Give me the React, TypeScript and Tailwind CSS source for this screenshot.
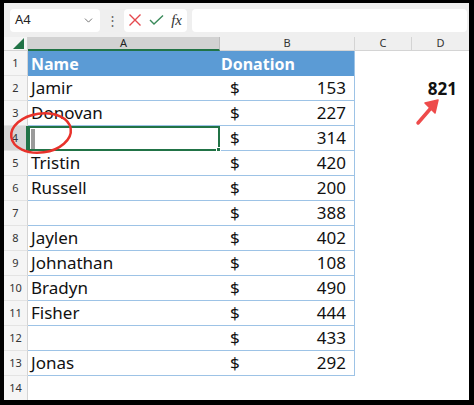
import { ChevronDown } from "lucide-react";

const rows: Array<{ name: string; amount: number | null }> = [
    { name: "Jamir", amount: 153 },
    { name: "Donovan", amount: 227 },
    { name: "", amount: 314 },
    { name: "Tristin", amount: 420 },
    { name: "Russell", amount: 200 },
    { name: "", amount: 388 },
    { name: "Jaylen", amount: 402 },
    { name: "Johnathan", amount: 108 },
    { name: "Bradyn", amount: 490 },
    { name: "Fisher", amount: 444 },
    { name: "", amount: 433 },
    { name: "Jonas", amount: 292 },
];

const cellFont = { fontFamily: '"Noto Sans", "Open Sans", sans-serif' };

function RowHeader({ n, active }: { n: number; active?: boolean }) {
    return (
        <div className={`flex items-center justify-center text-[11px] text-[#333] border-b border-[#e3e3e3] ${active ? "bg-[#d6d6d6] border-r-2 border-r-[#217346]" : "bg-[#f5f5f5] border-r border-r-[#d4d4d4]"}`}>
            {n}
        </div>
    );
}

export default function App() {
    return (
        <div className="w-[474px] h-[405px] bg-black pt-[3px] pl-[4px] pr-[5px] pb-[5px]" style={cellFont}>
            <div className="relative w-full h-full bg-white flex flex-col overflow-hidden">
                {/* formula bar */}
                <div className="h-[34px] bg-[#efefef] flex items-center pl-[6px] pr-[2px] gap-[5px] shrink-0">
                    <div className="w-[90px] h-[23px] bg-white rounded-[4px] flex items-center justify-between px-[5px] text-[13px] text-[#222]">
                        <span>A4</span>
                        <ChevronDown size={13} strokeWidth={1.5} className="text-[#555]" />
                    </div>
                    <div className="w-[14px] text-center text-[#666] text-[13px] leading-none">⋮</div>
                    <div className="w-[63px] h-[23px] bg-white rounded-[4px] flex items-center justify-between pl-[4px] pr-[5px]">
                        <svg width="14" height="14" viewBox="0 0 14 14">
                            <path d="M1.5 1.5 L12.5 12.5 M12.5 1.5 L1.5 12.5" stroke="#e5484d" strokeWidth="1.4" fill="none" />
                        </svg>
                        <svg width="15" height="12" viewBox="0 0 15 12">
                            <path d="M1 6 L5 10 L14 1.5" stroke="#3a8a5a" strokeWidth="1.4" fill="none" />
                        </svg>
                        <span className="italic text-[15px] text-[#333]" style={{ fontFamily: '"Liberation Serif", serif' }}>fx</span>
                    </div>
                    <div className="flex-1 h-[23px] bg-white rounded-[4px]" />
                </div>

                {/* grid */}
                <div className="grid grid-cols-[24px_192px_135px_57px_1fr] grid-rows-[14px] auto-rows-[25px]">
                    {/* column headers */}
                    <div className="relative bg-[#f5f5f5] border-r border-b border-[#d4d4d4]">
                        <svg className="absolute right-[3px] bottom-[1px]" width="11" height="11" viewBox="0 0 11 11">
                            <path d="M11 0 L11 11 L0 11 Z" fill="#217346" />
                        </svg>
                    </div>
                    <div className="bg-[#d2d2d2] border-b-2 border-[#217346] border-r border-r-[#bdbdbd] flex items-center justify-center text-[11px] text-[#222]">A</div>
                    <div className="bg-[#efefef] border-b border-r border-[#d4d4d4] flex items-center justify-center text-[11px] text-[#333]">B</div>
                    <div className="bg-[#efefef] border-b border-r border-[#d4d4d4] flex items-center justify-center text-[11px] text-[#333]">C</div>
                    <div className="bg-[#efefef] border-b border-[#d4d4d4] flex items-center justify-center text-[11px] text-[#333]">D</div>

                    {/* row 1 - table header */}
                    <RowHeader n={1} />
                    <div className="bg-[#5b9bd5] text-white font-bold text-[16px] flex items-center pl-[3px]">Name</div>
                    <div className="bg-[#5b9bd5] text-white font-bold text-[16px] flex items-center pl-[1px] border-r border-[#9dc3e6]">Donation</div>
                    <div />
                    <div />

                    {rows.map((r, i) => {
                        const n = i + 2;
                        const active = n === 4;
                        return (
                            <div key={n} className="contents">
                                <RowHeader n={n} active={active} />
                                {active ? (
                                    <div className="relative border-2 border-[#217346] flex items-center">
                                        <div className="ml-[1px] w-[4px] h-[20px] bg-[#9a9a9a]" />
                                        <div className="absolute -right-[3px] -bottom-[3px] w-[5px] h-[5px] bg-[#217346] border border-white" />
                                    </div>
                                ) : (
                                    <div className="border-b border-[#9dc3e6] flex items-center pl-[3px] text-[17px] text-[#111]">{r.name}</div>
                                )}
                                <div className="border-b border-r border-[#9dc3e6] flex items-center justify-between pl-[10px] pr-[8px] text-[17px] text-[#111]">
                                    <span>$</span>
                                    <span>{r.amount}</span>
                                </div>
                                <div />
                                <div className="flex items-center justify-end pr-[12px] text-[17px] font-bold text-[#111]">
                                    {n === 2 ? "821" : ""}
                                </div>
                            </div>
                        );
                    })}

                    <RowHeader n={14} />
                    <div />
                    <div />
                    <div />
                    <div />
                </div>

                {/* annotations */}
                <svg className="absolute left-0 top-0 pointer-events-none" width="465" height="397" viewBox="0 0 465 397">
                    <ellipse cx="37" cy="130" rx="30" ry="19.5" transform="rotate(-8 37 130)" fill="none" stroke="#e8322b" strokeWidth="2.5" />
                    <path d="M414 120 L427 105" stroke="#ee4b4b" strokeWidth="3.5" strokeLinecap="round" />
                    <path d="M434 97 L421 100 L431 110 Z" fill="#ee4b4b" stroke="#ee4b4b" strokeWidth="1.5" strokeLinejoin="round" />
                </svg>
            </div>
        </div>
    );
}
